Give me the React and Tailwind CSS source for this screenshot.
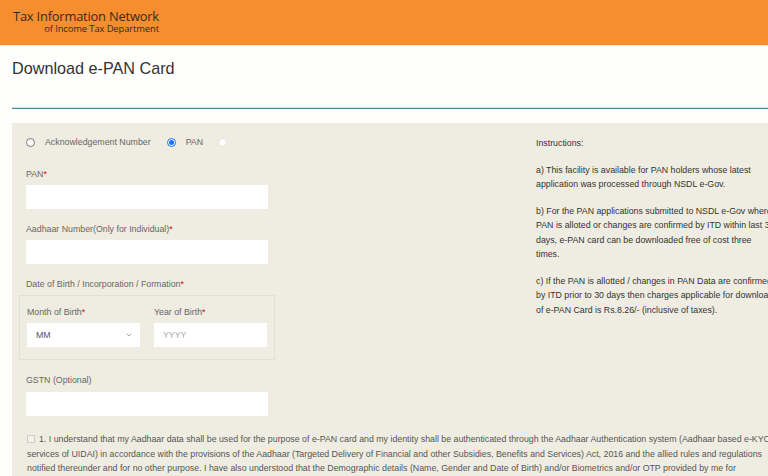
import { ChevronDown } from "lucide-react";

const FONT = { fontFamily: '"Liberation Sans", Arial, sans-serif' };

function Label({ children, required }) {
  return (
    <div className="text-[8.8px] leading-[12px] text-[#666]">
      {children}
      {required && <span className="text-[#d00]">*</span>}
    </div>
  );
}

function TextBox({ placeholder, className = "" }) {
  return (
    <div className={`flex h-[24px] items-center bg-white px-[9px] text-[8.8px] text-[#aaa] ${className}`}>
      {placeholder}
    </div>
  );
}

function Radio({ checked, faded }) {
  if (checked)
    return (
      <span className="flex h-[9px] w-[9px] items-center justify-center rounded-full border border-[#1a73e8] bg-white">
        <span className="block h-[5px] w-[5px] rounded-full bg-[#1a73e8]" />
      </span>
    );
  return (
    <span
      className={`block h-[9px] w-[9px] rounded-full border bg-white ${faded ? "border-[#e2e0d4]" : "border-[#777]"}`}
    />
  );
}

export default function App() {
  return (
    <div className="h-[476px] w-[768px] overflow-hidden bg-[#fefefd]" style={FONT}>
      {/* orange header with the TIN wordmark */}
      <header className="h-[46px] border-b border-[#fbe3c8] bg-[#f68d2e]">
        <div className="inline-flex flex-col items-end pl-[13px] pt-[10px] text-[#3a2a1e]" style={{ fontFamily: '"Open Sans", sans-serif' }}>
          <span className="text-[12.9px] font-medium leading-[13px] tracking-[-0.2px]">Tax Information Network</span>
          <span className="text-[9.4px] font-medium leading-[11px] tracking-[-0.1px]">of Income Tax Department</span>
        </div>
      </header>

      <div className="pl-[12px]">
        <h1 className="pt-[12px] text-[16.2px] leading-[20px] text-[#333]">Download e-PAN Card</h1>
        <div className="mt-[29px] h-[2px] border-t border-[#cfe6e6] bg-[#45918f]" />

        <div className="mt-[14px] w-[800px] bg-[#efede1] pt-[13px]">
          <div className="flex">
            <div className="w-[510px] pl-[14px]">
              <div className="flex items-center text-[8.8px] text-[#666]">
                <Radio />
                <span className="ml-[10px]">Acknowledgement Number</span>
                <span className="ml-[16px]"><Radio checked /></span>
                <span className="ml-[10px]">PAN</span>
                <span className="ml-[15px]"><Radio faded /></span>
              </div>

              <div className="mt-[19px]"><Label required>PAN</Label></div>
              <TextBox className="mt-[5px] w-[242px]" />

              <div className="mt-[14px]"><Label required>Aadhaar Number(Only for Individual)</Label></div>
              <TextBox className="mt-[5px] w-[242px]" />

              <div className="mt-[14px]"><Label required>Date of Birth / Incorporation / Formation</Label></div>
              <div className="-ml-[7px] mt-[5px] w-[256px] border border-[#e3e0d2] px-[7px] pb-[12px] pt-[10px]">
                <div className="flex gap-[14px]">
                  <div>
                    <Label required>Month of Birth</Label>
                    <div className="mt-[5px] flex h-[24px] w-[113px] items-center justify-between bg-white pl-[9px] pr-[7px] text-[8.8px] text-[#555]">
                      MM
                      <ChevronDown size={8} strokeWidth={2} className="text-[#777]" />
                    </div>
                  </div>
                  <div>
                    <Label required>Year of Birth</Label>
                    <TextBox placeholder="YYYY" className="mt-[5px] w-[113px]" />
                  </div>
                </div>
              </div>

              <div className="mt-[14px]"><Label>GSTN (Optional)</Label></div>
              <TextBox className="mt-[6px] w-[242px]" />
            </div>

            {/* instructions column, runs past the window edge */}
            <div className="ml-[14px] w-[240px] text-[8.8px] leading-[14.5px] text-[#333]">
              <p className="mb-[12px]">Instructions:</p>
              <p className="mb-[12px]">a) This facility is available for PAN holders whose latest application was processed through NSDL e-Gov.</p>
              <p className="mb-[12px]">
                b) For the PAN applications submitted to NSDL e-Gov where PAN is alloted or changes are confirmed by ITD within last 30 days, e-PAN card can be downloaded free of cost three times.
              </p>
              <p>
                c) If the PAN is allotted / changes in PAN Data are confirmed by ITD prior to 30 days then charges applicable for download of e-PAN Card is Rs.8.26/- (inclusive of taxes).
              </p>
            </div>
          </div>

          <p className="mt-[16px] w-[765px] pl-[15px] text-[8.8px] leading-[14.5px] text-[#555]">
            <span className="mr-[4px] inline-block h-[8px] w-[8px] border border-[#cfcdc4] bg-[#f4f3ee] align-[-1px]" />
            1. I understand that my Aadhaar data shall be used for the purpose of e-PAN card and my identity shall be authenticated through the Aadhaar Authentication system (Aadhaar based e-KYC services of UIDAI) in accordance with the provisions of the Aadhaar (Targeted Delivery of Financial and other Subsidies, Benefits and Services) Act, 2016 and the allied rules and regulations notified thereunder and for no other purpose. I have also understood that the Demographic details (Name, Gender and Date of Birth) and/or Biometrics and/or OTP provided by me for authentication shall be used only for authenticating my identity through the Aadhaar Authentication system for that specific transaction and for no other purposes.
          </p>
        </div>
      </div>
    </div>
  );
}
